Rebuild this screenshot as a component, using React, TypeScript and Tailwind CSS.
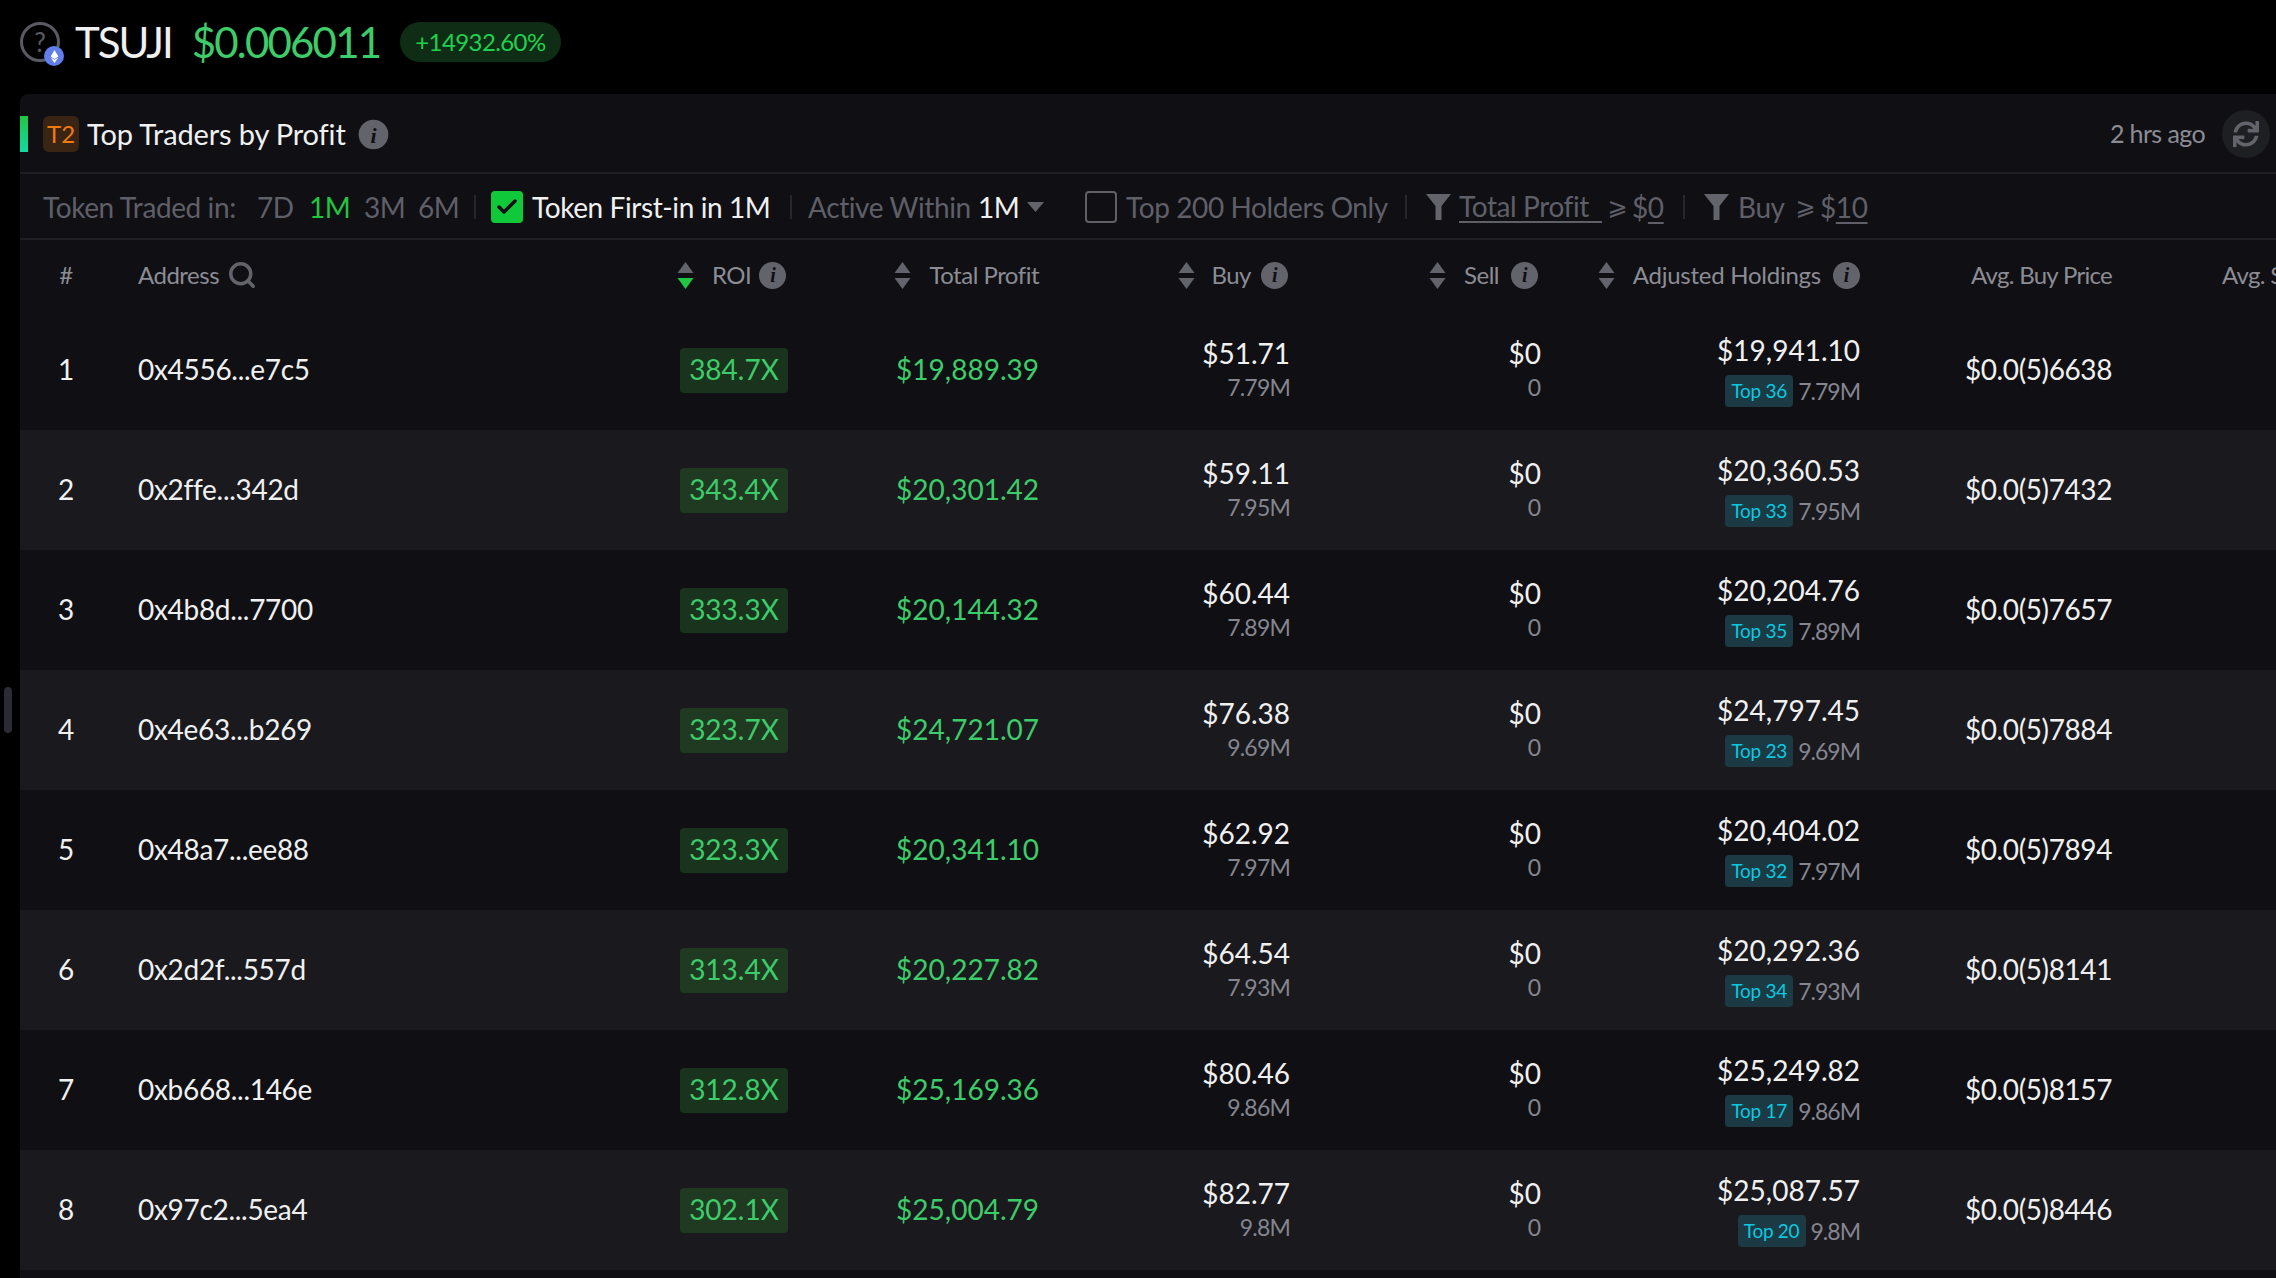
import { Check, Search } from 'lucide-react';
import { FaEthereum, FaSync } from 'react-icons/fa';

const ROWS = [
  { addr: '0x4556...e7c5', roi: '384.7X', profit: '$19,889.39', buy: '$51.71', amount: '7.79M', adjusted: '$19,941.10', top: 'Top 36', price: '$0.0(5)6638' },
  { addr: '0x2ffe...342d', roi: '343.4X', profit: '$20,301.42', buy: '$59.11', amount: '7.95M', adjusted: '$20,360.53', top: 'Top 33', price: '$0.0(5)7432' },
  { addr: '0x4b8d...7700', roi: '333.3X', profit: '$20,144.32', buy: '$60.44', amount: '7.89M', adjusted: '$20,204.76', top: 'Top 35', price: '$0.0(5)7657' },
  { addr: '0x4e63...b269', roi: '323.7X', profit: '$24,721.07', buy: '$76.38', amount: '9.69M', adjusted: '$24,797.45', top: 'Top 23', price: '$0.0(5)7884' },
  { addr: '0x48a7...ee88', roi: '323.3X', profit: '$20,341.10', buy: '$62.92', amount: '7.97M', adjusted: '$20,404.02', top: 'Top 32', price: '$0.0(5)7894' },
  { addr: '0x2d2f...557d', roi: '313.4X', profit: '$20,227.82', buy: '$64.54', amount: '7.93M', adjusted: '$20,292.36', top: 'Top 34', price: '$0.0(5)8141' },
  { addr: '0xb668...146e', roi: '312.8X', profit: '$25,169.36', buy: '$80.46', amount: '9.86M', adjusted: '$25,249.82', top: 'Top 17', price: '$0.0(5)8157' },
  { addr: '0x97c2...5ea4', roi: '302.1X', profit: '$25,004.79', buy: '$82.77', amount: '9.8M', adjusted: '$25,087.57', top: 'Top 20', price: '$0.0(5)8446' },
];

const COLS = 'grid grid-cols-[92px_528px_160px_239px_251px_251px_319px_252px_144px]';

function Info() {
  return (
    <span className="flex h-[27px] w-[27px] shrink-0 items-center justify-center rounded-full bg-[#63636c] font-['Liberation_Serif',serif] text-[20px] font-bold italic leading-none text-[#101014]">
      i
    </span>
  );
}

function Sort({ active }: { active?: boolean }) {
  return (
    <svg width="17" height="27" viewBox="0 0 17 27" className="mr-[6px] shrink-0">
      <path d="M8.5 0 L16.5 11 H0.5 Z" fill="#63636c" />
      <path d="M8.5 27 L16.5 16 H0.5 Z" fill={active ? '#22c53f' : '#63636c'} />
    </svg>
  );
}

function Funnel() {
  return (
    <svg width="25" height="26" viewBox="0 0 25 26" className="shrink-0">
      <path d="M0 0 H25 L15.5 12 V26 H9.5 V12 Z" fill="#63636c" />
    </svg>
  );
}

function Divider() {
  return <span className="h-[24px] w-[2px] shrink-0 bg-[#26262b]" />;
}

function Gte() {
  return <span className="w-[30px] text-center font-['DejaVu_Sans',sans-serif] text-[24px]">⩾</span>;
}

export default function App() {
  return (
    <div className="relative h-[1278px] w-[2276px] overflow-hidden bg-black font-['Lato',sans-serif] text-[#f0f0f0]">
      <div className="absolute left-[4px] top-[687px] h-[46px] w-[8px] rounded bg-[#2a2b33]" />

      <header className="flex h-[94px] items-start pl-[20px] pt-[20px]">
        <div className="relative mt-[2px] h-[40px] w-[40px] rounded-full border-[3px] border-[#5a5a62] text-center text-[26px] leading-[34px] text-[#5a5a62]">
          ?
          <span className="absolute left-[21px] top-[21px] flex h-[20px] w-[20px] items-center justify-center rounded-full bg-[#627eea] text-white">
            <FaEthereum size={13} />
          </span>
        </div>
        <h1 className="ml-[15px] text-[42px] leading-[44px] tracking-[-2px]">TSUJI</h1>
        <span className="ml-[20px] text-[42px] leading-[44px] tracking-[-1.8px] text-[#3ecb6a]">$0.006011</span>
        <span className="ml-[20px] mt-[2px] rounded-full bg-[#0f2c14] px-[15px] text-[24px] leading-[40px] tracking-[-0.6px] text-[#1fd14f]">
          +14932.60%
        </span>
      </header>

      <main className="ml-[20px] h-[1184px] rounded-tl-lg bg-[#101014]">
        <div className="flex h-[80px] items-center border-b-2 border-[#1e1e23] pt-[2px]">
          <span className="h-[36px] w-[8px] bg-gradient-to-b from-[#22c53f] to-[#14d8a0]" />
          <span className="ml-[15px] flex h-[36px] w-[36px] items-center justify-center rounded-md bg-[#3a2414] text-[24px] text-[#f07a10]">
            T2
          </span>
          <span className="ml-[8px] text-[29px] tracking-[-0.15px]">Top Traders by Profit</span>
          <span className="ml-[14px] scale-110">
            <Info />
          </span>
          <span className="ml-auto text-[25px] tracking-[-0.6px] text-[#8c8c94]">2 hrs ago</span>
          <span className="ml-[17px] mr-[6px] flex h-[48px] w-[48px] items-center justify-center rounded-full bg-[#1e1f23] text-[#63636c]">
            <FaSync size={26} />
          </span>
        </div>

        <div className="flex h-[66px] items-center whitespace-nowrap border-b-2 border-[#1e1e23] pl-[23px] pt-[2px] text-[28px] tracking-[-0.4px] text-[#5f5f68]">
          <span className="w-[214px]">Token Traded in:</span>
          <span className="w-[52px]">7D</span>
          <span className="w-[55px] text-[#22c53f]">1M</span>
          <span className="w-[54px]">3M</span>
          <span className="w-[56px]">6M</span>
          <Divider />
          <span className="ml-[15px] flex h-[32px] w-[32px] shrink-0 items-center justify-center rounded bg-[#0fc93a] text-[#101014]">
            <Check size={24} strokeWidth={3.5} />
          </span>
          <span className="ml-[9px] w-[258px] text-[#f0f0f0]">Token First-in in 1M</span>
          <Divider />
          <span className="ml-[16px] w-[170px]">Active Within</span>
          <span className="w-[49px] text-[#f0f0f0]">1M</span>
          <svg width="17" height="10" viewBox="0 0 17 10" className="shrink-0">
            <path d="M0 0 H17 L8.5 10 Z" fill="#63636c" />
          </svg>
          <span className="ml-[24px]">
            <Divider />
          </span>
          <span className="ml-[17px] h-[32px] w-[32px] shrink-0 rounded border-2 border-[#5f5f68]" />
          <span className="ml-[9px] w-[279px]">Top 200 Holders Only</span>
          <Divider />
          <span className="ml-[19px]">
            <Funnel />
          </span>
          <span className="ml-[8px] w-[143px] shrink-0 border-b-2 border-[#5f5f68] leading-[30px]">Total Profit</span>
          <Gte />
          <span className="w-[51px]">
            $<span className="underline underline-offset-4">0</span>
          </span>
          <Divider />
          <span className="ml-[19px]">
            <Funnel />
          </span>
          <span className="ml-[9px] w-[52px]">Buy</span>
          <Gte />
          <span>
            $<span className="underline underline-offset-4">10</span>
          </span>
        </div>

        <div className={`${COLS} h-[70px] items-center whitespace-nowrap text-[24px] tracking-[-0.5px] text-[#8c8c94]`}>
          <span className="text-center">#</span>
          <span className="flex items-center gap-[8px] pl-[26px]">
            Address
            <Search size={30} strokeWidth={2.8} className="text-[#63636c]" />
          </span>
          <span className="flex items-center gap-[12px] pl-[37px]">
            <Sort active />
            <span className="mr-[-4px]">ROI</span>
            <Info />
          </span>
          <span className="flex items-center justify-end gap-[12px]">
            <Sort />
            Total Profit
          </span>
          <span className="flex items-center justify-end gap-[10px] pr-[2px]">
            <Sort />
            Buy
            <Info />
          </span>
          <span className="flex items-center justify-end gap-[12px] pr-[3px]">
            <Sort />
            Sell
            <Info />
          </span>
          <span className="flex items-center justify-end gap-[12px] tracking-[-0.25px]">
            <Sort />
            Adjusted Holdings
            <Info />
          </span>
          <span className="text-right tracking-[-0.7px]">Avg. Buy Price</span>
          <span className="pl-[110px] tracking-[-0.7px]">Avg. Sell Price</span>
        </div>

        {ROWS.map((row, i) => (
          <div
            key={row.addr}
            className={`${COLS} h-[120px] items-center whitespace-nowrap text-[28px] ${i % 2 ? 'bg-[#19191e]' : 'bg-[#101014]'}`}
          >
            <span className="pb-[2px] text-center">{i + 1}</span>
            <span className="pb-[2px] pl-[26px] tracking-[-0.3px]">{row.addr}</span>
            <span className="pl-[40px]">
              <span className={`flex h-[45px] w-[108px] items-center justify-center rounded pb-[2px] text-[#3ecb6a] ${i % 2 ? 'bg-[#203a22]' : 'bg-[#1a331c]'}`}>
                {row.roi}
              </span>
            </span>
            <span className="pb-[2px] text-right text-[#3ecb6a]">{row.profit}</span>
            <div className="flex flex-col items-end leading-[34px]">
              <span>{row.buy}</span>
              <span className="text-[23px] tracking-[-0.8px] text-[#85858f]">{row.amount}</span>
            </div>
            <div className="flex flex-col items-end leading-[34px]">
              <span>$0</span>
              <span className="text-[23px] text-[#85858f]">0</span>
            </div>
            <div className="flex flex-col items-end">
              <span className="leading-[34px]">{row.adjusted}</span>
              <span className="mt-[8px] flex h-[32px] items-center gap-[5px] text-[23px] tracking-[-1px] text-[#85858f]">
                <span className="flex h-[32px] w-[68px] items-center justify-center rounded bg-[#1c3a44] text-[19px] tracking-[-0.3px] text-[#0cc8e0]">
                  {row.top}
                </span>
                {row.amount}
              </span>
            </div>
            <span className="pb-[2px] text-right tracking-[-0.4px]">{row.price}</span>
            <span />
          </div>
        ))}
      </main>
    </div>
  );
}
